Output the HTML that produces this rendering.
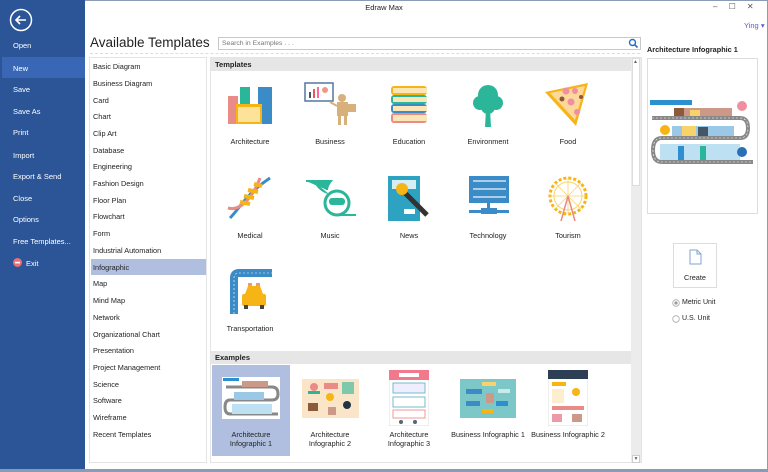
<!DOCTYPE html>
<html><head><meta charset="utf-8"><style>
*{margin:0;padding:0;box-sizing:border-box}
body{width:768px;height:472px;overflow:hidden;background:#fff;font-family:"Liberation Sans",sans-serif;font-size:7.5px;color:#222;position:relative}
.a{position:absolute}
#side{left:0;top:0;width:85px;height:469px;background:#2b5597;border-left:2px solid #2b5597}
.cat{position:absolute;left:93px;font-size:7.3px}
.lbl{position:absolute;width:80px;text-align:center;font-size:7.3px}
</style></head><body>
<div class="a" style="left:0;top:0;width:768px;height:1px;background:#8c9bb5"></div>
<div class="a" id="side"></div>
<div class="a" style="left:2px;top:57px;width:83px;height:21px;background:#3a67b5"></div>
<svg class="a" style="left:9px;top:8px" width="24" height="24"><circle cx="12" cy="12" r="10.5" fill="none" stroke="#fff" stroke-width="1.5"/><path d="M17 12H7M11 8L7 12L11 16" fill="none" stroke="#fff" stroke-width="1.6"/></svg>
<div class="a" style="left:13px;top:41px;color:#fff">Open</div>
<div class="a" style="left:13px;top:64px;color:#fff">New</div>
<div class="a" style="left:13px;top:85px;color:#fff">Save</div>
<div class="a" style="left:13px;top:107px;color:#fff">Save As</div>
<div class="a" style="left:13px;top:128px;color:#fff">Print</div>
<div class="a" style="left:13px;top:151px;color:#fff">Import</div>
<div class="a" style="left:13px;top:172px;color:#fff">Export &amp; Send</div>
<div class="a" style="left:13px;top:194px;color:#fff">Close</div>
<div class="a" style="left:13px;top:215px;color:#fff">Options</div>
<div class="a" style="left:13px;top:237px;color:#fff">Free Templates...</div>
<svg class="a" style="left:13px;top:258px" width="9" height="9"><circle cx="4.5" cy="4.5" r="4.5" fill="#e8707a"/><rect x="2" y="3.8" width="5" height="1.6" fill="#fff"/></svg>
<div class="a" style="left:26px;top:259px;color:#fff">Exit</div>
<div class="a" style="left:0;top:3px;width:768px;text-align:center;font-size:7.5px">Edraw Max</div>
<div class="a" style="left:713px;top:2px;font-size:8px;color:#555">–&nbsp;&nbsp;&nbsp;&nbsp;&nbsp;☐&nbsp;&nbsp;&nbsp;&nbsp;&nbsp;✕</div>
<div class="a" style="left:744px;top:21px;color:#5a5adc;font-size:7.5px">Ying ▾</div>
<div class="a" style="left:90px;top:35px;font-size:13.5px;color:#222">Available Templates</div>
<div class="a" style="left:218px;top:37px;width:423px;height:13px;border:1px solid #c8c8c8;font-size:6.8px;color:#777;padding:2px 3px">Search in Examples . . .</div>
<svg class="a" style="left:628px;top:38px" width="11" height="11"><circle cx="4.5" cy="4.5" r="3" fill="none" stroke="#2a6ebb" stroke-width="1.4"/><path d="M6.8 6.8L9.5 9.5" stroke="#2a6ebb" stroke-width="1.6"/></svg>
<div class="a" style="left:90px;top:53px;width:550px;border-top:1px dashed #ddd"></div>
<div class="a" style="left:89px;top:57px;width:118px;height:406px;border:1px solid #e4e4e4"></div>
<div class="a" style="left:91px;top:259px;width:115px;height:16px;background:#b0bfdf"></div>
<div class="cat" style="top:62px">Basic Diagram</div>
<div class="cat" style="top:79px">Business Diagram</div>
<div class="cat" style="top:96px">Card</div>
<div class="cat" style="top:112px">Chart</div>
<div class="cat" style="top:129px">Clip Art</div>
<div class="cat" style="top:146px">Database</div>
<div class="cat" style="top:162px">Engineering</div>
<div class="cat" style="top:179px">Fashion Design</div>
<div class="cat" style="top:196px">Floor Plan</div>
<div class="cat" style="top:212px">Flowchart</div>
<div class="cat" style="top:229px">Form</div>
<div class="cat" style="top:246px">Industrial Automation</div>
<div class="cat" style="top:263px">Infographic</div>
<div class="cat" style="top:279px">Map</div>
<div class="cat" style="top:296px">Mind Map</div>
<div class="cat" style="top:313px">Network</div>
<div class="cat" style="top:330px">Organizational Chart</div>
<div class="cat" style="top:346px">Presentation</div>
<div class="cat" style="top:363px">Project Management</div>
<div class="cat" style="top:380px">Science</div>
<div class="cat" style="top:396px">Software</div>
<div class="cat" style="top:413px">Wireframe</div>
<div class="cat" style="top:430px">Recent Templates</div>
<div class="a" style="left:210px;top:57px;width:432px;height:406px;border:1px solid #e4e4e4"></div>
<div class="a" style="left:211px;top:58px;width:420px;height:13px;background:#e6e6e6;font-weight:bold;font-size:7.5px;padding:2px 4px">Templates</div>
<div class="a" style="left:211px;top:351px;width:420px;height:13px;background:#e6e6e6;font-weight:bold;font-size:7.5px;padding:2px 4px">Examples</div>
<div class="a" style="left:631px;top:58px;width:10px;height:404px;background:#ececec"></div>
<div class="a" style="left:632px;top:58px;width:8px;height:128px;background:#fff;border:1px solid #ddd"></div>
<div class="a" style="left:633px;top:59px;font-size:5px;color:#666">▲</div>
<div class="a" style="left:632px;top:455px;width:8px;height:8px;background:#fff;border:1px solid #ccc;font-size:5px;color:#666;text-align:center">▼</div>
<svg class="a" style="left:226px;top:84px" width="48" height="42"><rect x="2" y="12" width="10" height="28" fill="#e98b86"/><rect x="14" y="3" width="10" height="20" fill="#2bb69a"/><rect x="32" y="3" width="14" height="37" fill="#3b8bc6"/><rect x="10" y="20" width="26" height="20" fill="#f7b515"/><rect x="12" y="23" width="22" height="15" fill="#fde29a"/></svg>
<svg class="a" style="left:304px;top:82px" width="52" height="44"><rect x="1" y="1" width="28" height="18" fill="#fff" stroke="#5477a0" stroke-width="1.5"/><rect x="5" y="10" width="2" height="6" fill="#456"/><rect x="9" y="7" width="2" height="9" fill="#e55"/><rect x="13" y="5" width="2" height="11" fill="#f6a"/><circle cx="21" cy="8" r="3" fill="#e98"/><circle cx="38" cy="16" r="4" fill="#d7b07c"/><rect x="33" y="20" width="11" height="14" fill="#d7b07c"/><rect x="34" y="33" width="3" height="10" fill="#d7b07c"/><rect x="40" y="33" width="3" height="10" fill="#d7b07c"/><rect x="42" y="22" width="10" height="8" fill="#d7b07c"/><path d="M26 20L33 24" stroke="#d7b07c" stroke-width="2"/></svg>
<svg class="a" style="left:390px;top:85px" width="38" height="40"><rect x="1" y="1" width="36" height="9" rx="3" fill="#f7b515"/><rect x="3" y="3" width="34" height="5" fill="#fbe6b7"/><rect x="1" y="10" width="36" height="9" rx="3" fill="#2bb69a"/><rect x="3" y="12" width="34" height="5" fill="#fbe6b7"/><rect x="1" y="19" width="36" height="9" rx="3" fill="#3b8bc6"/><rect x="3" y="21" width="34" height="5" fill="#fbe6b7"/><rect x="1" y="28" width="36" height="10" rx="3" fill="#e98b86"/><rect x="3" y="30" width="34" height="6" fill="#fbe6b7"/></svg>
<svg class="a" style="left:471px;top:83px" width="34" height="46"><circle cx="17" cy="12" r="10" fill="#2bb69a"/><circle cx="9" cy="20" r="7" fill="#2bb69a"/><circle cx="25" cy="20" r="7" fill="#2bb69a"/><circle cx="17" cy="24" r="7" fill="#2bb69a"/><path d="M15 26L14 44H20L19 26Z" fill="#2bb69a"/></svg>
<svg class="a" style="left:544px;top:82px" width="46" height="46"><path d="M1 10L44 1L32 44Z" fill="#f7b515"/><path d="M6 11L41 4L31 38Z" fill="#fdd89b"/><circle cx="22" cy="9" r="3.5" fill="#f08fa0"/><circle cx="31" cy="9" r="3" fill="#f08fa0"/><circle cx="27" cy="20" r="3.5" fill="#f08fa0"/><circle cx="33" cy="30" r="3" fill="#f08fa0"/><circle cx="18" cy="17" r="2.5" fill="#8c5a3a"/><circle cx="37" cy="15" r="2" fill="#8c5a3a"/></svg>
<div class="lbl" style="left:210px;top:137px">Architecture</div>
<div class="lbl" style="left:290px;top:137px">Business</div>
<div class="lbl" style="left:369px;top:137px">Education</div>
<div class="lbl" style="left:448px;top:137px">Environment</div>
<div class="lbl" style="left:528px;top:137px">Food</div>
<svg class="a" style="left:226px;top:174px" width="48" height="48"><path d="M4 44C14 34 20 20 44 4" stroke="#3b8bc6" stroke-width="3" fill="none"/><path d="M2 34C16 38 28 20 34 4" stroke="#e98b86" stroke-width="3" fill="none"/><path d="M14 28L24 30M18 22L28 24M22 16L32 18M28 10L36 12" stroke="#f7b515" stroke-width="4"/></svg>
<svg class="a" style="left:305px;top:178px" width="52" height="42"><path d="M1 3H26Q22 8 22 12" fill="#2bb69a" stroke="#2bb69a" stroke-width="2"/><path d="M8 3Q15 15 24 16" fill="#2bb69a"/><circle cx="32" cy="25" r="12" fill="none" stroke="#2bb69a" stroke-width="3"/><rect x="24" y="20" width="16" height="7" rx="3" fill="#2bb69a"/><path d="M32 37H51" stroke="#2bb69a" stroke-width="2"/></svg>
<svg class="a" style="left:387px;top:175px" width="46" height="46"><rect x="1" y="1" width="32" height="45" fill="#2da3c1"/><rect x="5" y="5" width="24" height="9" fill="#fff" opacity=".8"/><rect x="17" y="34" width="11" height="5" fill="#fff"/><path d="M16 16L40 40" stroke="#333" stroke-width="5"/><circle cx="15" cy="14" r="6" fill="#f7b515"/></svg>
<svg class="a" style="left:468px;top:175px" width="42" height="44"><rect x="1" y="1" width="40" height="27" fill="#3b8bc6"/><path d="M5 6H38M5 14H38M5 22H38" stroke="#cfe4f5" stroke-width="1.5"/><rect x="19" y="28" width="3" height="8" fill="#3b8bc6"/><rect x="1" y="35" width="40" height="3" fill="#3b8bc6"/><rect x="13" y="33" width="16" height="6" fill="#3b8bc6"/></svg>
<svg class="a" style="left:545px;top:174px" width="46" height="48"><circle cx="23" cy="22" r="18" fill="none" stroke="#f7b515" stroke-width="3" stroke-dasharray="3 2"/><circle cx="23" cy="22" r="14" fill="none" stroke="#fbd36a" stroke-width="1"/><path d="M23 4V40M5 22H41M10 9L36 35M36 9L10 35" stroke="#fbd36a" stroke-width=".8"/><path d="M23 22L16 47M23 22L30 47" stroke="#e98b86" stroke-width="1.5"/></svg>
<div class="lbl" style="left:210px;top:231px">Medical</div>
<div class="lbl" style="left:290px;top:231px">Music</div>
<div class="lbl" style="left:369px;top:231px">News</div>
<div class="lbl" style="left:448px;top:231px">Technology</div>
<div class="lbl" style="left:528px;top:231px">Tourism</div>
<svg class="a" style="left:229px;top:268px" width="44" height="46"><path d="M5 46V10Q5 5 10 5H43" stroke="#3b8bc6" stroke-width="8" fill="none"/><path d="M5 46V10Q5 5 10 5H43" stroke="#fff" stroke-width=".6" stroke-dasharray="2 2" fill="none"/><rect x="19" y="15" width="4" height="3" fill="#e97"/><rect x="27" y="15" width="4" height="3" fill="#e97"/><path d="M16 26L19 18H31L34 26Z" fill="#f7b515"/><rect x="13" y="26" width="24" height="12" rx="2" fill="#f7b515"/><rect x="15" y="37" width="4" height="4" fill="#444"/><rect x="31" y="37" width="4" height="4" fill="#444"/></svg>
<div class="lbl" style="left:210px;top:324px">Transportation</div>
<div class="a" style="left:212px;top:365px;width:78px;height:91px;background:#b0bfdf"></div>
<svg class="a" style="left:222px;top:377px" width="58" height="42"><rect width="58" height="42" fill="#fff"/><rect x="1" y="1" width="16" height="3" fill="#2b8fd0"/><path d="M4 10H50Q56 10 56 17Q56 23 50 23H8Q3 23 3 30Q3 37 8 37H56" stroke="#888" stroke-width="3" fill="none"/><rect x="20" y="4" width="26" height="6" fill="#c98"/><rect x="12" y="15" width="30" height="8" fill="#9cc8e8"/><rect x="10" y="27" width="40" height="10" fill="#bde0f2"/></svg>
<svg class="a" style="left:302px;top:379px" width="57" height="39"><rect width="57" height="39" fill="#fbe5c8"/><circle cx="12" cy="8" r="4" fill="#e98b86"/><rect x="6" y="12" width="12" height="3" fill="#2bb69a"/><rect x="22" y="4" width="14" height="6" fill="#e98b86"/><circle cx="28" cy="18" r="4" fill="#f7b515"/><rect x="40" y="3" width="12" height="12" fill="#2bb69a" opacity=".6"/><circle cx="45" cy="26" r="4" fill="#234"/><rect x="6" y="24" width="10" height="8" fill="#8c5a3a"/><rect x="26" y="28" width="8" height="8" fill="#c98"/></svg>
<svg class="a" style="left:389px;top:370px" width="40" height="56"><rect width="40" height="56" fill="#fff" stroke="#ddd"/><rect x="0" y="0" width="40" height="10" fill="#f07a8c"/><rect x="10" y="3" width="20" height="4" fill="#fff"/><rect x="4" y="13" width="32" height="10" fill="#eef" stroke="#7bc"/><rect x="4" y="27" width="32" height="10" fill="#fff" stroke="#7bc"/><rect x="4" y="40" width="32" height="8" fill="#fff" stroke="#e99"/><circle cx="12" cy="52" r="2" fill="#567"/><circle cx="26" cy="52" r="2" fill="#567"/></svg>
<svg class="a" style="left:460px;top:379px" width="56" height="39"><rect width="56" height="39" fill="#7cc7c7"/><rect x="22" y="3" width="14" height="4" fill="#f7d36a"/><rect x="6" y="10" width="16" height="5" fill="#3b8bc6"/><rect x="26" y="14" width="8" height="10" fill="#c98"/><rect x="38" y="10" width="12" height="4" fill="#fff" opacity=".6"/><rect x="6" y="22" width="14" height="5" fill="#3b8bc6"/><rect x="36" y="22" width="12" height="5" fill="#2b8fd0"/><rect x="22" y="30" width="12" height="4" fill="#f7b515"/></svg>
<svg class="a" style="left:548px;top:370px" width="40" height="56"><rect width="40" height="56" fill="#fff" stroke="#ddd"/><rect width="40" height="9" fill="#2e3e55"/><rect x="4" y="12" width="14" height="4" fill="#f7b515"/><rect x="4" y="19" width="12" height="14" fill="#fdeed0"/><circle cx="28" cy="22" r="4" fill="#f7b515"/><rect x="4" y="36" width="32" height="4" fill="#e98b86"/><rect x="4" y="44" width="10" height="8" fill="#e9a"/><rect x="24" y="44" width="10" height="8" fill="#c98"/></svg>
<div class="lbl" style="left:211px;top:430px;line-height:9px">Architecture<br>Infographic 1</div>
<div class="lbl" style="left:290px;top:430px;line-height:9px">Architecture<br>Infographic 2</div>
<div class="lbl" style="left:369px;top:430px;line-height:9px">Architecture<br>Infographic 3</div>
<div class="lbl" style="left:448px;top:430px">Business Infographic 1</div>
<div class="lbl" style="left:528px;top:430px">Business Infographic 2</div>
<div class="a" style="left:647px;top:45px;font-weight:bold;font-size:7.3px">Architecture Infographic 1</div>
<div class="a" style="left:647px;top:58px;width:111px;height:156px;border:1px solid #ddd"></div>
<svg class="a" style="left:650px;top:100px" width="104" height="72"><rect width="104" height="72" fill="#fff"/><rect x="0" y="0" width="42" height="5" fill="#2b8fd0"/><path d="M2 18H90Q98 18 98 28Q98 38 90 38H12Q3 38 3 50Q3 62 12 62H103" stroke="#888" stroke-width="4" fill="none"/><path d="M2 18H90Q98 18 98 28Q98 38 90 38H12Q3 38 3 50Q3 62 12 62H103" stroke="#fff" stroke-width=".6" stroke-dasharray="2 2" fill="none"/><rect x="24" y="8" width="58" height="8" fill="#c98"/><rect x="24" y="8" width="10" height="8" fill="#8c5a3a"/><rect x="40" y="10" width="10" height="6" fill="#f7d36a"/><circle cx="92" cy="6" r="5" fill="#f08fa0"/><circle cx="15" cy="30" r="5" fill="#f7b515"/><rect x="22" y="26" width="62" height="10" fill="#9cc8e8"/><rect x="32" y="26" width="14" height="10" fill="#f7d36a"/><rect x="48" y="27" width="10" height="9" fill="#456"/><rect x="10" y="44" width="80" height="16" fill="#bde0f2"/><rect x="28" y="46" width="6" height="14" fill="#2b8fd0"/><rect x="50" y="46" width="6" height="14" fill="#2bb69a"/><circle cx="92" cy="52" r="5" fill="#2b6fb5"/></svg>
<div class="a" style="left:673px;top:243px;width:44px;height:45px;border:1px solid #ddd"></div>
<svg class="a" style="left:689px;top:249px" width="13" height="16"><path d="M1 1H8L12 5V15H1Z" fill="#fff" stroke="#7fa6cf"/><path d="M8 1V5H12" fill="none" stroke="#7fa6cf"/></svg>
<div class="a" style="left:673px;top:273px;width:44px;text-align:center;font-size:7.3px">Create</div>
<svg class="a" style="left:672px;top:299px" width="8" height="8"><circle cx="4" cy="4" r="3.3" fill="#fff" stroke="#aaa" stroke-width=".8"/><circle cx="4" cy="4" r="1.6" fill="#999"/></svg>
<div class="a" style="left:682px;top:299px;font-size:7px">Metric Unit</div>
<svg class="a" style="left:672px;top:315px" width="8" height="8"><circle cx="4" cy="4" r="3.3" fill="#fff" stroke="#aaa" stroke-width=".8"/></svg>
<div class="a" style="left:682px;top:315px;font-size:7px">U.S. Unit</div>
<div class="a" style="left:0;top:469px;width:768px;height:3px;background:#8c9bb5"></div>
<div class="a" style="left:767px;top:0;width:1px;height:472px;background:#8c9bb5"></div>
</body></html>
